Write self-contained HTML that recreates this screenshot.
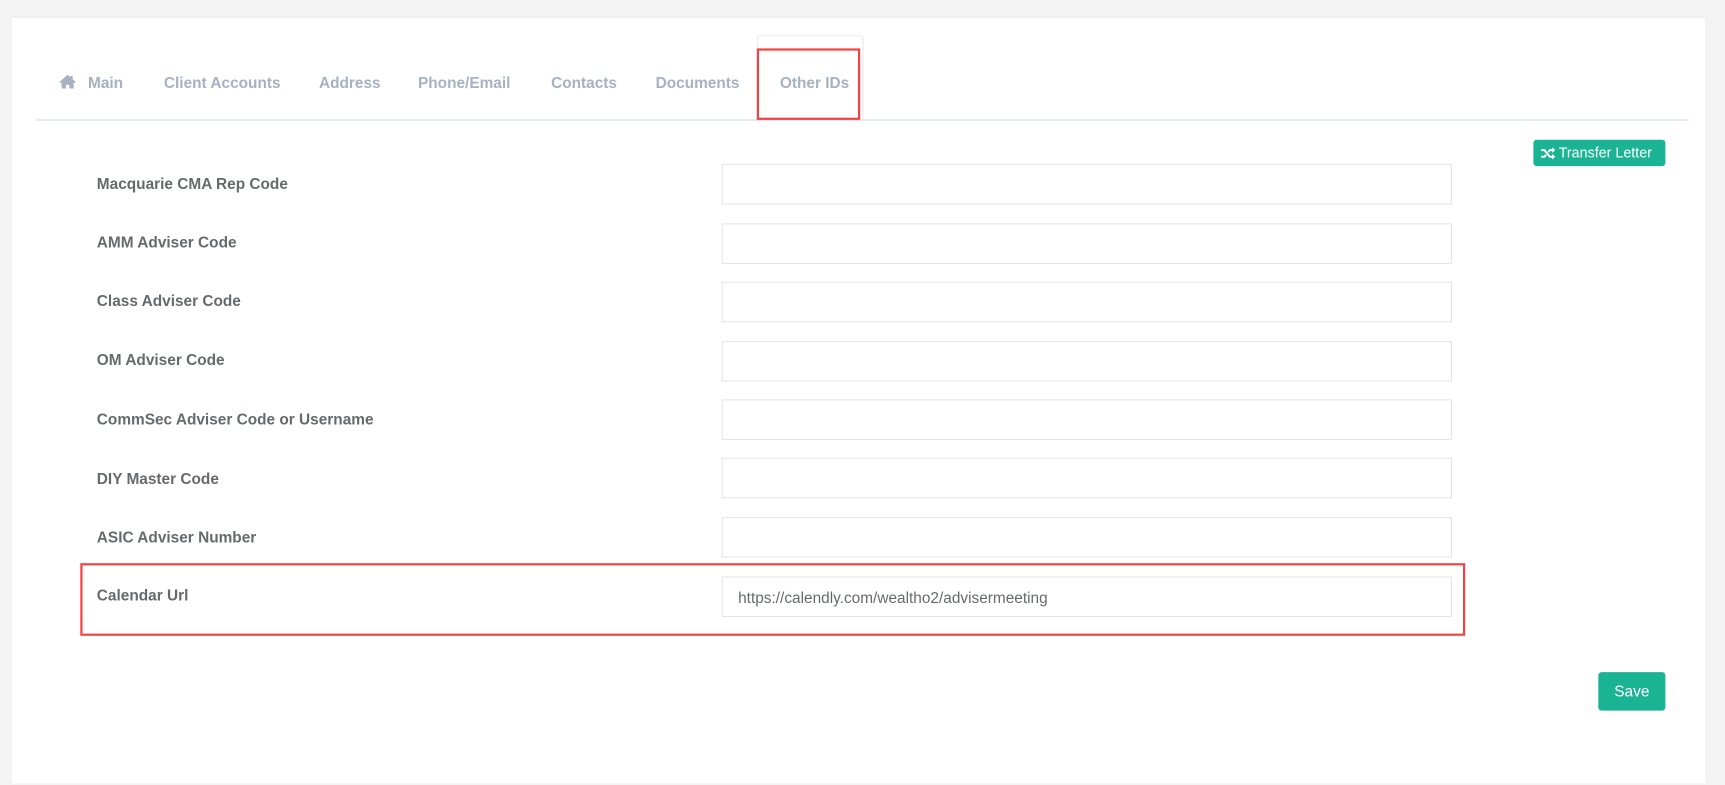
<!DOCTYPE html>
<html><head><meta charset="utf-8"><style>
html,body{margin:0;padding:0;width:1725px;height:785px;overflow:hidden;background:#f3f3f4;}
#w{position:absolute;left:0;top:0;width:1568px;height:714px;transform:scale(1.1);transform-origin:0 0;font-family:"Liberation Sans",sans-serif;}
.panel{position:absolute;left:11px;top:15px;width:1539px;height:696px;background:#fff;border-top:1px solid #e7eaec;}
.tab{position:absolute;top:67px;font-size:14px;color:#a7b1c2;font-weight:600;white-space:nowrap;}
.line{position:absolute;left:33px;top:108px;width:1502px;height:2px;background:#e7eaec;}
.active{position:absolute;left:688px;top:32px;width:97px;height:78px;background:#fff;border:1px solid #e7eaec;border-bottom:none;border-radius:3px 3px 0 0;box-sizing:border-box;}
.red{position:absolute;border:2px solid #f44242;box-sizing:border-box;}
.lbl{position:absolute;left:88px;font-size:14px;font-weight:bold;color:#676a6c;white-space:nowrap;}
.inp{position:absolute;left:656px;width:664px;height:37px;border:1px solid #e5e6e7;box-sizing:border-box;font-size:14px;color:#676a6c;padding:10px 0 0 14px;}
.btn{position:absolute;background:#1ab394;color:#fff;border-radius:3px;font-size:13px;white-space:nowrap;}
</style></head><body><div id="w">
<div class="panel"></div>
<div class="active"></div>
<div class="line"></div>
<svg style="position:absolute;left:53px;top:67px" width="17" height="14" viewBox="0 0 17 14"><path d="M8.5 1 L1 7.5 L2.3 8.6 L3 8 V13.5 H7 V10 H10 V13.5 H14 V8 L14.7 8.6 L16 7.5 L13 4.9 V2 H11 V3.2 Z" fill="#a7b1c2"/></svg>
<div class="tab" style="left:80px">Main</div>
<div class="tab" style="left:149px">Client Accounts</div>
<div class="tab" style="left:290px">Address</div>
<div class="tab" style="left:380px">Phone/Email</div>
<div class="tab" style="left:501px">Contacts</div>
<div class="tab" style="left:596px">Documents</div>
<div class="tab" style="left:709px">Other IDs</div>
<div class="red" style="left:688px;top:44px;width:94px;height:65px"></div>
<div class="btn" style="left:1394px;top:127px;width:120px;height:24px;line-height:24px;">
<svg style="position:absolute;left:7px;top:7px" width="13" height="11" viewBox="0 0 13 11"><path d="M0 2.5 H3 L8 8.5 H10 M0 8.5 H3 L4.5 6.7 M6.5 4.3 L8 2.5 H10" stroke="#fff" stroke-width="1.8" fill="none"/><path d="M10 0 L13 2.5 L10 5 Z M10 6 L13 8.5 L10 11 Z" fill="#fff"/></svg>
<span style="position:absolute;left:23px">Transfer Letter</span></div>
<div class="lbl" style="top:159px">Macquarie CMA Rep Code</div>
<div class="inp" style="top:149px"></div>
<div class="lbl" style="top:212px">AMM Adviser Code</div>
<div class="inp" style="top:203px"></div>
<div class="lbl" style="top:265px">Class Adviser Code</div>
<div class="inp" style="top:256px"></div>
<div class="lbl" style="top:319px">OM Adviser Code</div>
<div class="inp" style="top:310px"></div>
<div class="lbl" style="top:373px">CommSec Adviser Code or Username</div>
<div class="inp" style="top:363px"></div>
<div class="lbl" style="top:427px">DIY Master Code</div>
<div class="inp" style="top:416px"></div>
<div class="lbl" style="top:480px">ASIC Adviser Number</div>
<div class="inp" style="top:470px"></div>
<div class="lbl" style="top:533px">Calendar Url</div>
<div class="inp" style="top:524px">https://calendly.com/wealtho2/advisermeeting</div>
<div class="red" style="left:73px;top:512px;width:1259px;height:66px"></div>
<div class="btn" style="left:1453px;top:611px;width:61px;height:35px;line-height:35px;text-align:center;font-size:14px;">Save</div>
</div></body></html>
